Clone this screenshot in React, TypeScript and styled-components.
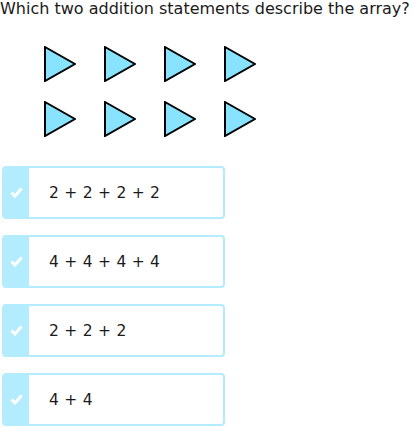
import { createGlobalStyle } from 'styled-components'
import styled from 'styled-components'

const GlobalStyle = createGlobalStyle`
  body {
    margin: 0;
    background: #fff;
    font-family: "DejaVu Sans", Verdana, sans-serif;
    color: #000;
  }
`

const Page = styled.div`
  display: flex;
  flex-direction: column;
  width: 413px;
`

const Question = styled.div`
  font-size: 16px;
  line-height: 18px;
  color: #1a1a1a;
  white-space: nowrap;
`

const ArrayGrid = styled.div`
  display: grid;
  grid-template-columns: repeat(4, 32px);
  column-gap: 28px;
  row-gap: 19px;
  margin: 28px 0 0 44px;
`

const Choices = styled.div`
  display: flex;
  flex-direction: column;
  gap: 16px;
  margin: 29px 0 0 2px;
`

const Choice = styled.div`
  display: flex;
  align-items: stretch;
  width: 223px;
  height: 53px;
  box-sizing: border-box;
  border: 2px solid #b3ebff;
  border-radius: 4px;
  overflow: hidden;
  background: #fff;
`

const CheckStrip = styled.div`
  display: flex;
  align-items: center;
  justify-content: center;
  width: 25px;
  background: #b3ebff;
`

const ChoiceText = styled.div`
  display: flex;
  align-items: center;
  padding-left: 20px;
  font-size: 15.5px;
  word-spacing: 0.5px;
  color: #1a1a1a;
`

const Triangle = () => (
  <svg width="32" height="36" viewBox="0 0 32 36">
    <polygon
      points="1,1 31,18 1,35"
      fill="#87e3ff"
      stroke="#000"
      strokeWidth="2"
      strokeLinejoin="miter"
    />
  </svg>
)

const Check = () => (
  <svg width="13" height="11" viewBox="0 0 13 11">
    <polyline points="1.5,5.5 5,9 11.5,1.5" fill="none" stroke="#fff" strokeWidth="3" />
  </svg>
)

const options = ['2 + 2 + 2 + 2', '4 + 4 + 4 + 4', '2 + 2 + 2', '4 + 4']

function App() {
  return (
    <Page>
      <GlobalStyle />
      <Question>Which two addition statements describe the array?</Question>
      <ArrayGrid>
        {Array.from({ length: 8 }).map((_, i) => (
          <Triangle key={i} />
        ))}
      </ArrayGrid>
      <Choices>
        {options.map((text, i) => (
          <Choice key={i}>
            <CheckStrip>
              <Check />
            </CheckStrip>
            <ChoiceText>{text}</ChoiceText>
          </Choice>
        ))}
      </Choices>
    </Page>
  )
}

export default App
